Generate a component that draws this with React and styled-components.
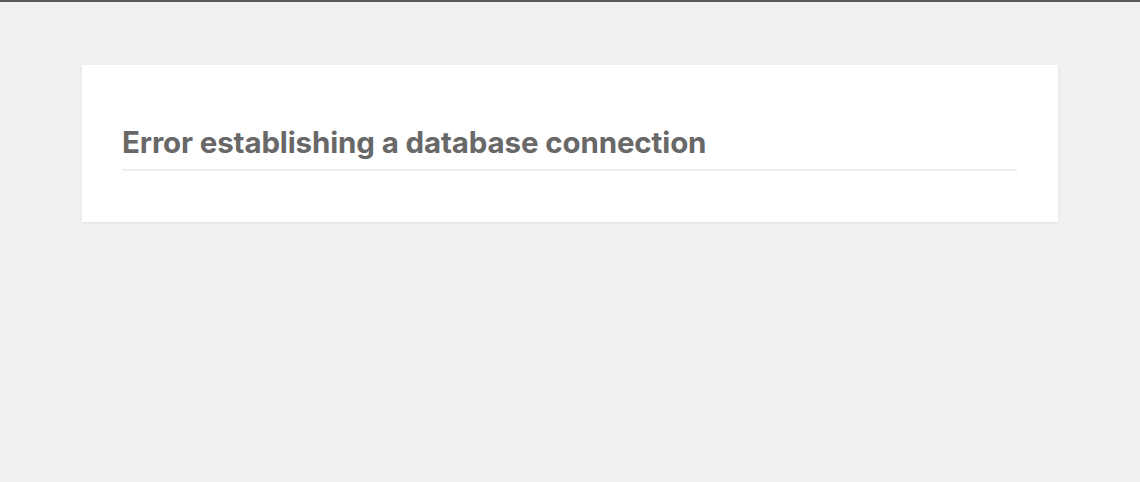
import React from 'react';
import styled, { createGlobalStyle } from 'styled-components';

const GlobalStyle = createGlobalStyle`
  html, body {
    margin: 0;
    padding: 0;
  }
  body {
    background: #f1f1f1;
    min-height: 482px;
    border-top: 2px solid #5a5a5a;
    box-sizing: border-box;
    font-family: Inter, "Noto Sans", sans-serif;
  }
`;

const Page = styled.div`
  padding: 63px 82px 0;
`;

const Card = styled.div`
  background: #fff;
  padding: 57px 41px 51px 40px;
  box-shadow: 0 1px 3px rgba(0, 0, 0, 0.08);
`;

const Heading = styled.h1`
  margin: 0;
  padding-bottom: 7px;
  border-bottom: 2px solid #eeeeee;
  color: #686868;
  font-size: 29.5px;
  font-weight: 700;
  line-height: 40px;
  letter-spacing: -0.13px;
`;

const App = () => {
  return (
    <>
      <GlobalStyle />
      <Page>
        <Card>
          <Heading>Error establishing a database connection</Heading>
        </Card>
      </Page>
    </>
  );
};

export default App;
